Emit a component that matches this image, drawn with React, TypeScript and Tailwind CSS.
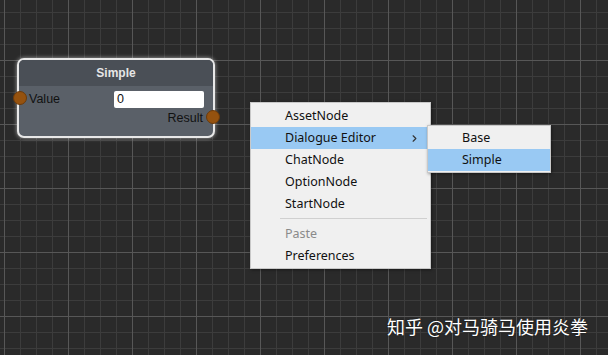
import { ChevronRight } from 'lucide-react'

const menuFont = "[font-family:'Noto_Sans','Noto_Sans_CJK_SC',sans-serif]"

function Port({ className }: { className: string }) {
  return (
    <div
      className={`absolute w-[14px] h-[14px] rounded-full bg-[#95520f] border border-[#6b3a0a] ${className}`}
    />
  )
}

function GraphNode() {
  return (
    <div className="absolute left-[17px] top-[58px] w-[198px] h-[80px] rounded-[7px] border-2 border-[#e8e8e8] shadow-[0_0_4px_rgba(255,255,255,0.6)] bg-[#5a6068] flex flex-col [font-family:'Liberation_Sans',Arial,sans-serif]">
      <div className="h-[26px] rounded-t-[5px] bg-[#4a4f56] flex items-center justify-center text-[12px] font-bold text-[#e6e6e6]">
        Simple
      </div>
      <div className="relative flex-1 px-[10px] pt-[4px]">
        <div className="flex items-center justify-between h-[18px]">
          <span className="text-[12.5px] text-[#111]">Value</span>
          <div className="w-[90px] h-[17px] bg-white rounded-[2px] text-[12.5px] text-[#111] px-[3px] leading-[17px] -mr-[1px]">
            0
          </div>
        </div>
        <div className="flex justify-end mt-[1px]">
          <span className="text-[12.5px] text-[#111]">Result</span>
        </div>
      </div>
      <Port className="-left-[6px] top-[31px]" />
      <Port className="-right-[7px] top-[50px]" />
    </div>
  )
}

function MenuItem({
  label,
  active,
  disabled,
  sub,
}: {
  label: string
  active?: boolean
  disabled?: boolean
  sub?: boolean
}) {
  return (
    <div
      className={`h-[22px] flex items-center pl-[34px] pr-[12px] text-[12.5px] ${
        active ? 'bg-[#99c9f3]' : ''
      } ${disabled ? 'text-[#8a8a8a]' : 'text-[#111]'}`}
    >
      <span className="flex-1">{label}</span>
      {sub && <ChevronRight size={11} strokeWidth={2.5} className="text-[#333] -mr-[2px]" />}
    </div>
  )
}

function ContextMenu() {
  return (
    <div
      className={`absolute left-[250px] top-[102px] w-[181px] h-[167px] bg-[#f0f0f0] border border-[#c8c8c8] shadow-[1px_1px_3px_rgba(0,0,0,0.4)] pt-[2px] ${menuFont}`}
    >
      <MenuItem label="AssetNode" />
      <MenuItem label="Dialogue Editor" active sub />
      <MenuItem label="ChatNode" />
      <MenuItem label="OptionNode" />
      <MenuItem label="StartNode" />
      <div className="ml-[29px] mr-[3px] mt-[3px] mb-[4px] h-px bg-[#d0d0d0]" />
      <MenuItem label="Paste" disabled />
      <MenuItem label="Preferences" />
    </div>
  )
}

function SubMenu() {
  return (
    <div
      className={`absolute left-[427px] top-[125px] w-[124px] h-[48px] bg-[#f0f0f0] border border-[#c8c8c8] shadow-[1px_1px_3px_rgba(0,0,0,0.4)] pt-[1px] ${menuFont}`}
    >
      <MenuItem label="Base" />
      <MenuItem label="Simple" active />
    </div>
  )
}

export default function App() {
  return (
    <div className="relative w-[608px] h-[355px] overflow-hidden bg-[#2a2a2a] [background-image:linear-gradient(to_right,#575757_1px,transparent_1px),linear-gradient(to_bottom,#575757_1px,transparent_1px),linear-gradient(to_right,#3c3c3c_1px,transparent_1px),linear-gradient(to_bottom,#3c3c3c_1px,transparent_1px)] [background-size:64px_64px,64px_64px,16px_16px,16px_16px] [background-position:4px_60px,4px_60px,4px_12px,4px_12px]">
      <GraphNode />
      <ContextMenu />
      <SubMenu />
      <div className="absolute left-[387px] top-[314px] text-[18px] text-white [text-shadow:0_0_2px_rgba(0,0,0,0.6)] [font-family:'Noto_Sans_CJK_SC',sans-serif] leading-[24px] whitespace-nowrap">
        知乎 @对马骑马使用炎拳
      </div>
    </div>
  )
}
